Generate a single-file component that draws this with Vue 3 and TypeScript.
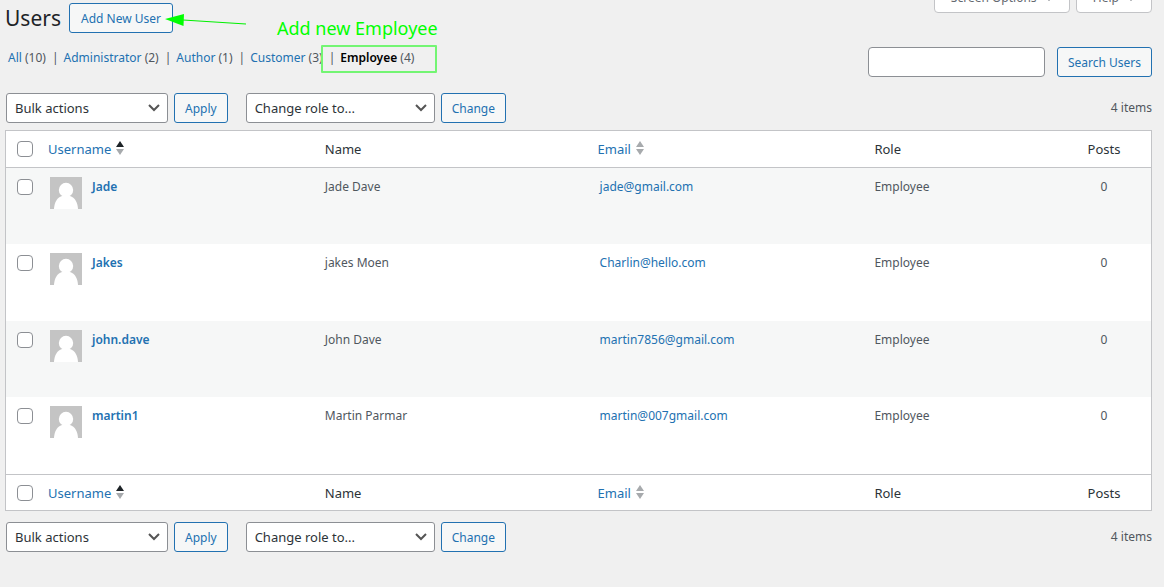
<script setup lang="ts">
import { ref } from 'vue'

interface View { label: string; count: number; current?: boolean }
interface User { login: string; name: string; email: string; role: string; posts: number }

const views: View[] = [
  { label: 'All', count: 10 },
  { label: 'Administrator', count: 2 },
  { label: 'Author', count: 1 },
  { label: 'Customer', count: 3 },
  { label: 'Employee', count: 4, current: true },
]

const users: User[] = [
  { login: 'Jade', name: 'Jade Dave', email: 'jade@gmail.com', role: 'Employee', posts: 0 },
  { login: 'Jakes', name: 'jakes Moen', email: 'Charlin@hello.com', role: 'Employee', posts: 0 },
  { login: 'john.dave', name: 'John Dave', email: 'martin7856@gmail.com', role: 'Employee', posts: 0 },
  { login: 'martin1', name: 'Martin Parmar', email: 'martin@007gmail.com', role: 'Employee', posts: 0 },
]

const search = ref('')
const selected = ref<string[]>([])

function toggleAll(event: Event) {
  const checked = (event.target as HTMLInputElement).checked
  selected.value = checked ? users.map((u) => u.login) : []
}
</script>

<template>
  <main class="page">
    <header class="top">
      <h1>Users</h1>
      <a href="#add" class="button add">Add New User</a>
      <div class="meta">
        <button type="button" class="tab">Screen Options <span class="caret"></span></button>
        <button type="button" class="tab">Help <span class="caret"></span></button>
      </div>
    </header>

    <div class="filters">
      <ul class="views">
        <li v-for="(view, i) in views" :key="view.label">
          <span v-if="i > 0" class="sep">|</span>
          <a href="#view" :class="{ current: view.current }">{{ view.label }} <span class="count">({{ view.count }})</span></a>
        </li>
      </ul>
      <form class="search" @submit.prevent>
        <input v-model="search" type="search" aria-label="Search Users" />
        <button type="submit" class="button">Search Users</button>
      </form>
    </div>

    <div class="tablenav">
      <select aria-label="Select bulk action" class="bulk"><option>Bulk actions</option></select>
      <button type="button" class="button">Apply</button>
      <select aria-label="Change role to" class="role-select"><option>Change role to...</option></select>
      <button type="button" class="button">Change</button>
      <span class="total">4 items</span>
    </div>

    <table>
      <colgroup>
        <col class="c-check" /><col class="c-main" /><col class="c-main" /><col class="c-main" /><col /><col class="c-posts" />
      </colgroup>
      <thead>
        <tr>
          <td class="check"><input type="checkbox" aria-label="Select all" @change="toggleAll" /></td>
          <th scope="col" class="sortable">
            <a href="#username">Username
              <svg class="sort" width="8" height="14" viewBox="0 0 8 14"><path d="M0 6L4 0l4 6z" fill="#1d2327" /><path d="M0 8h8L4 14z" fill="#a7aaad" /></svg>
            </a>
          </th>
          <th scope="col">Name</th>
          <th scope="col" class="sortable">
            <a href="#email">Email
              <svg class="sort" width="8" height="14" viewBox="0 0 8 14"><path d="M0 6L4 0l4 6z" fill="#a7aaad" /><path d="M0 8h8L4 14z" fill="#a7aaad" /></svg>
            </a>
          </th>
          <th scope="col">Role</th>
          <th scope="col" class="posts">Posts</th>
        </tr>
      </thead>
      <tbody>
        <tr v-for="user in users" :key="user.login">
          <td class="check"><input v-model="selected" type="checkbox" :value="user.login" :aria-label="`Select ${user.login}`" /></td>
          <td>
            <div class="identity">
              <svg class="avatar" width="32" height="32" viewBox="0 0 32 32">
                <rect width="32" height="32" fill="#c4c4c4" />
                <circle cx="16" cy="13" r="7.200" fill="#fff" />
                <path d="M4 32C4.300 25.500 7 20.500 12 19H20C25 20.500 27.700 25.500 28 32z" fill="#fff" />
              </svg>
              <a href="#user" class="login">{{ user.login }}</a>
            </div>
          </td>
          <td>{{ user.name }}</td>
          <td><a :href="`mailto:${user.email}`">{{ user.email }}</a></td>
          <td>{{ user.role }}</td>
          <td class="posts">{{ user.posts }}</td>
        </tr>
      </tbody>
      <tfoot>
        <tr>
          <td class="check"><input type="checkbox" aria-label="Select all" @change="toggleAll" /></td>
          <th scope="col" class="sortable">
            <a href="#username">Username
              <svg class="sort" width="8" height="14" viewBox="0 0 8 14"><path d="M0 6L4 0l4 6z" fill="#1d2327" /><path d="M0 8h8L4 14z" fill="#a7aaad" /></svg>
            </a>
          </th>
          <th scope="col">Name</th>
          <th scope="col" class="sortable">
            <a href="#email">Email
              <svg class="sort" width="8" height="14" viewBox="0 0 8 14"><path d="M0 6L4 0l4 6z" fill="#a7aaad" /><path d="M0 8h8L4 14z" fill="#a7aaad" /></svg>
            </a>
          </th>
          <th scope="col">Role</th>
          <th scope="col" class="posts">Posts</th>
        </tr>
      </tfoot>
    </table>

    <div class="tablenav bottom">
      <select aria-label="Select bulk action" class="bulk"><option>Bulk actions</option></select>
      <button type="button" class="button">Apply</button>
      <select aria-label="Change role to" class="role-select"><option>Change role to...</option></select>
      <button type="button" class="button">Change</button>
      <span class="total">4 items</span>
    </div>

    <svg class="note-arrow" width="82" height="14" viewBox="0 0 82 14" aria-hidden="true">
      <path d="M18 7L81 11" stroke="#00f000" stroke-width="1.200" fill="none" />
      <path d="M0 6L19 1L18.500 13z" fill="#00ff00" />
    </svg>
    <span class="note-text">Add new Employee</span>
    <span class="note-box"></span>
  </main>
</template>

<style>
body {
  margin: 0;
  background: #f0f0f0;
}
</style>

<style scoped>
.page {
  position: relative;
  box-sizing: border-box;
  min-height: 100vh;
  overflow: hidden;
  padding: 3px 12px 0 5px;
  background: #f0f0f0;
  color: #50575e;
  font: 12px/22px "Segoe UI", "Noto Sans", "Open Sans", sans-serif;
}
a { color: #2271b1; text-decoration: none; }
.top { display: flex; align-items: flex-start; height: 30px; }
h1 { margin: 0 8px 0 0; font-size: 21px; line-height: 30px; font-weight: 400; color: #1d2327; }
.button {
  box-sizing: border-box;
  height: 30px;
  padding: 1px 10px 0;
  border: 1px solid #2271b1;
  border-radius: 3px;
  background: #f6f7f7;
  color: #2271b1;
  font: inherit;
  line-height: 28px;
  white-space: nowrap;
}
.add { padding: 1px 11px 0; }
.meta { display: flex; gap: 6px; margin: -20px 0 0 auto; }
.tab {
  box-sizing: border-box;
  height: 30px;
  padding: 0 16px;
  border: 1px solid #c3c4c7;
  border-radius: 0 0 4px 4px;
  background: #fff;
  color: #646970;
  font: inherit;
}
.caret {
  display: inline-block;
  margin-left: 5px;
  border: 4px solid transparent;
  border-top-color: #787c82;
  border-bottom: 0;
  vertical-align: 1px;
}
.filters { display: flex; align-items: flex-start; justify-content: space-between; margin-top: 14px; }
.views { display: flex; margin: 0; padding: 0 0 0 3px; list-style: none; white-space: nowrap; }
.sep { margin: 0 5px 0 6px; }
.count { color: #50575e; }
.current { color: #000; font-weight: 600; }
.current .count { font-weight: 400; }
.search { display: flex; gap: 12px; }
.search input {
  box-sizing: border-box;
  width: 177px;
  height: 30px;
  padding: 0 8px;
  border: 1px solid #8c8f94;
  border-radius: 4px;
  background: #fff;
  font: inherit;
  appearance: none;
}
.tablenav { display: flex; align-items: center; gap: 6px; margin: 16px 0 7px 1px; }
.bottom { margin-top: 11px; }
select {
  box-sizing: border-box;
  height: 30px;
  padding: 0 24px 0 8px;
  border: 1px solid #8c8f94;
  border-radius: 3px;
  background: #fff url('data:image/svg+xml;utf8,<svg xmlns="http://www.w3.org/2000/svg" width="12" height="8" viewBox="0 0 12 8"><path d="M1 1l5 5 5-5" fill="none" stroke="%23555" stroke-width="2"/></svg>') no-repeat right 7px center;
  color: #2c3338;
  font: inherit;
  font-size: 13px;
  appearance: none;
}
.bulk { width: 162px; }
.role-select { width: 189px; margin-left: 12px; }
.total { margin-left: auto; }
table {
  width: 100%;
  table-layout: fixed;
  border: 1px solid #c3c4c7;
  border-spacing: 0;
  background: #fff;
}
.c-check { width: 34px; }
.c-main { width: 24%; }
.c-posts { width: 94px; }
th, td { box-sizing: border-box; padding: 8px 10px; text-align: left; vertical-align: top; }
th { font-size: 13px; line-height: 20px; font-weight: 400; color: #2c3338; }
thead th, thead td { height: 37px; border-bottom: 1px solid #c3c4c7; }
tfoot th, tfoot td { height: 36px; padding-bottom: 7px; border-top: 1px solid #c3c4c7; }
th.sortable { padding-left: 8px; }
.sortable a { display: flex; align-items: center; gap: 5px; }
.sort { margin-top: -2px; }
tbody td { height: 76px; }
tbody tr:nth-child(even) td { height: 77px; }
tbody tr:nth-child(odd) { background: #f6f7f7; }
.check { padding: 10px 0 0 11px; }
.check input {
  display: block;
  box-sizing: border-box;
  width: 16px;
  height: 16px;
  margin: 0;
  border: 1px solid #8c8f94;
  border-radius: 4px;
  background: #fff;
  appearance: none;
}
.check input:checked { background: #2271b1; }
tbody .check { padding-top: 11px; }
.identity { display: flex; gap: 10px; }
.avatar { margin-top: 1px; }
.login { font-weight: 600; }
th.posts, td.posts { padding-left: 0; padding-right: 0; text-align: center; }
.note-arrow { position: absolute; left: 165px; top: 13px; }
.note-text { position: absolute; left: 277px; top: 14px; color: #00ff00; font-size: 18px; line-height: 28px; white-space: nowrap; }
.note-box { position: absolute; box-sizing: border-box; left: 321px; top: 45px; width: 116px; height: 28px; border: 2px solid #73f573; border-radius: 1px; }
</style>
